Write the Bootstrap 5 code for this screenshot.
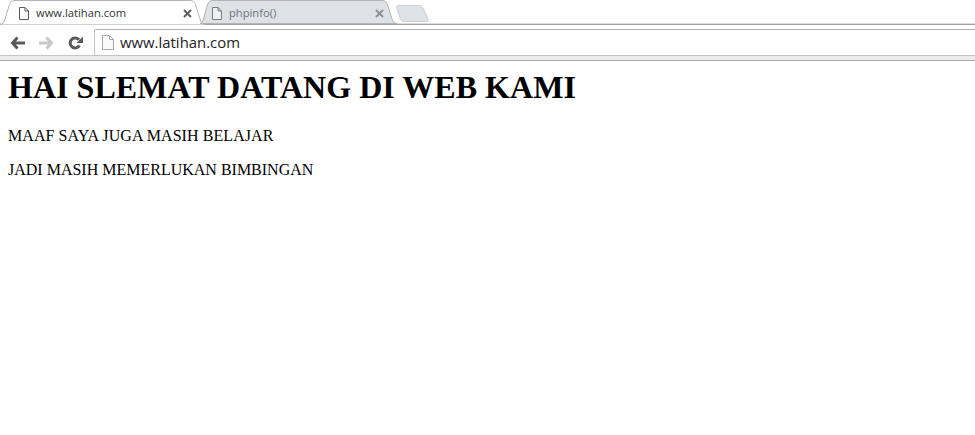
<!DOCTYPE html>
<html lang="id">
<head>
    <meta charset="UTF-8">
    <title>www.latihan.com</title>
    <link rel="stylesheet" href="https://cdn.jsdelivr.net/npm/bootstrap@5.3.0/dist/css/bootstrap.min.css">
    <style>
        body {
            background-color: #fff;
            color: #000;
            font-family: "Liberation Serif", serif;
            font-size: 16px;
        }
        .tabstrip {
            height: 25px;
            border-bottom: 1px solid #a3a3a3;
            background: linear-gradient(#fff, #fff 23px, #dcdcdc 23px);
        }
        .tab-item {
            position: relative;
            width: 205px;
            height: 24px;
            margin-right: -6px;
            font-family: "Open Sans", sans-serif;
            font-size: 11.2px;
            color: #333;
        }
        .tab-item.back-tab {
            width: 199px;
            margin-right: 0;
            color: #6f7480;
        }
        .tab-shape { position: absolute; left: 0; top: 0; }
        .tab-body {
            position: relative;
            height: 24px;
            padding: 2px 13px 0 19px;
        }
        .back-tab .tab-body { padding: 2px 14px 0 13px; }
        .tab-label { margin-left: 7px; }
        .newtab-shape { margin-left: -2px; margin-top: 5px; }
        .toolbar {
            height: 36px;
            padding: 4px 0 0 10px;
            background: linear-gradient(#fff, #fff 30px, #c6c6c6 30px, #c6c6c6 31px, #ececec 31px, #ececec 35px, #a8a8a8 35px);
        }
        .nav-icons {
            gap: 14px;
            width: 84px;
            height: 27px;
        }
        .omnibox {
            height: 27px;
            padding-left: 7px;
            border: 1px solid #c4c4c4;
            border-top-color: #aeaeae;
            border-right: 0;
            border-radius: 2px 0 0 2px;
            font-family: "Open Sans", sans-serif;
            font-size: 14.9px;
            color: #222;
            gap: 6px;
        }
        .page-area { padding: 8px; }
        .page-area h1 {
            font-family: "Liberation Serif", serif;
            font-size: 32px;
            font-weight: 700;
            line-height: 37px;
            letter-spacing: .035px;
            margin: 0 0 21px;
        }
        .page-area p {
            line-height: 18px;
            margin: 0 0 16px;
        }
        .page-area p.first-line { letter-spacing: .07px; }
    </style>
</head>
<body>

<div class="tabstrip d-flex">
    <div class="tab-item">
        <svg class="tab-shape" width="205" height="25" viewBox="0 0 205 25">
            <path d="M0 24.500C3 24.500 4 22 5 19L9.500 4.500C10.300 2 12 0.500 15 0.500H190C193 0.500 194.700 2 195.500 4.500L200 19C201 22 202 24.500 205 24.500" fill="#fff" stroke="#b4b4b4"/>
        </svg>
        <div class="tab-body d-flex align-items-center">
            <svg width="10" height="13" viewBox="0 0 10 13"><path d="M0.500 0.500H6L9.500 4V12.500H0.500ZM6 0.500V4H9.500" fill="#fff" stroke="#5a5a5a"/></svg>
            <span class="tab-label flex-grow-1">www.latihan.com</span>
            <svg width="9" height="9" viewBox="0 0 9 9"><path d="M1 1L8 8M8 1L1 8" stroke="#5f5f5f" stroke-width="2"/></svg>
        </div>
    </div>
    <div class="tab-item back-tab">
        <svg class="tab-shape" width="199" height="25" viewBox="0 0 199 25">
            <path d="M1 23.500C2.500 23.500 3.500 21.500 4.500 19L8.500 4.500C9.300 2 11 0.500 14 0.500H183C186 0.500 187.700 2 188.500 4.500L193 19C194 21.500 195.500 23.500 198 23.500Z" fill="#dee1e6" stroke="#b4b4b4"/>
        </svg>
        <div class="tab-body d-flex align-items-center">
            <svg width="10" height="13" viewBox="0 0 10 13"><path d="M0.500 0.500H6L9.500 4V12.500H0.500ZM6 0.500V4H9.500" fill="#eef0f2" stroke="#7a7a7a"/></svg>
            <span class="tab-label flex-grow-1">phpinfo()</span>
            <svg width="9" height="9" viewBox="0 0 9 9"><path d="M1 1L8 8M8 1L1 8" stroke="#8f9195" stroke-width="2"/></svg>
        </div>
    </div>
    <svg class="newtab-shape" width="33" height="17" viewBox="0 0 33 17">
        <path d="M0.500 2C0.500 1 1 0.500 2 0.500H23C25 0.500 26 1.500 26.500 2.500L32 13.500C32.800 15.300 32 16.500 30 16.500H8C6 16.500 5 15.500 4.500 14.500Z" fill="#dee1e6" stroke="#ccd0d5"/>
    </svg>
</div>

<div class="toolbar d-flex">
    <div class="nav-icons d-flex align-items-center">
        <svg width="15" height="14" viewBox="0 0 15 14"><path d="M7.500 1.500L2.500 7L7.500 12.500M3 7H15" fill="none" stroke="#5a5a5a" stroke-width="3"/></svg>
        <svg width="15" height="14" viewBox="0 0 15 14"><path d="M7.500 1.500L12.500 7L7.500 12.500M12 7H0" fill="none" stroke="#c8c8c8" stroke-width="3"/></svg>
        <svg width="15" height="14" viewBox="0 0 15 14"><path d="M11.500 9.500A5 5 0 1 1 11 3.800" fill="none" stroke="#5a5a5a" stroke-width="3"/><path d="M15 0.500V7H8.500Z" fill="#5a5a5a"/></svg>
    </div>
    <div class="omnibox flex-grow-1 d-flex align-items-center">
        <svg width="12" height="15" viewBox="0 0 12 15"><path d="M0.500 0.500H7.500L11.500 4.500V14.500H0.500ZM7.500 0.500V4.500H11.500" fill="#fafafa" stroke="#a8a8a8"/></svg>
        <span>www.latihan.com</span>
    </div>
</div>

<div class="page-area">
    <h1>HAI SLEMAT DATANG DI WEB KAMI</h1>
    <p class="first-line">MAAF SAYA JUGA MASIH BELAJAR</p>
    <p>JADI MASIH MEMERLUKAN BIMBINGAN</p>
</div>

<script src="https://cdn.jsdelivr.net/npm/bootstrap@5.3.0/dist/js/bootstrap.bundle.min.js"></script>
</body>
</html>
